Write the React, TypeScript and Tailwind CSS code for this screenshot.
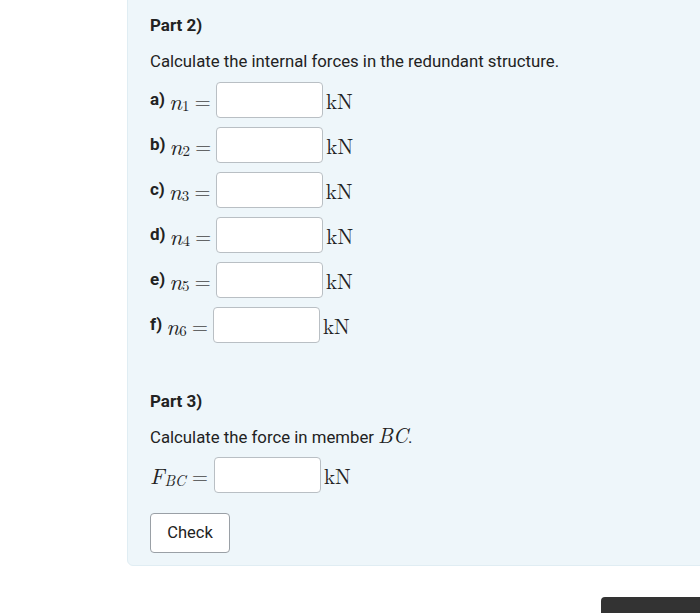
const rows = [
  { label: "a)", sub: "1" },
  { label: "b)", sub: "2" },
  { label: "c)", sub: "3" },
  { label: "d)", sub: "4" },
  { label: "e)", sub: "5" },
  { label: "f)", sub: "6" },
];

const serif = "font-['Latin_Modern_Roman','Liberation_Serif',serif]";

function AnswerBox() {
  return (
    <input
      type="text"
      className="w-[107px] h-[36px] rounded-[4px] border border-[#b9bfc4] bg-white outline-none"
    />
  );
}

function Unit() {
  return <span className={`${serif} text-[21px] text-[#222] ml-[3px] leading-none`}>kN</span>;
}

export default function App() {
  return (
    <div className="w-[700px] h-[613px] bg-white overflow-hidden relative font-['Roboto',sans-serif] text-[#222]">
      <div className="ml-[127px] mr-[-20px] mt-[-10px] h-[576px] bg-[#eef6fa] border border-[#e0edf3] rounded-b-[6px] pl-[22px] pt-[23px]">
        <h2 className="text-[17px] font-bold leading-[22px]">Part 2)</h2>
        <p className="text-[16.75px] mt-[14px] leading-[22px]">
          Calculate the internal forces in the redundant structure.
        </p>

        <div className="mt-[10px] flex flex-col gap-[9px]">
          {rows.map((r) => (
            <div key={r.label} className="flex items-center h-[36px]">
              <span className="text-[17px] font-bold">{r.label}</span>
              <span className={`${serif} italic text-[23px] ml-[4px] leading-none`}>n</span>
              <span className={`${serif} text-[15px] leading-none mt-[9px]`}>{r.sub}</span>
              <span className={`${serif} text-[21px] mx-[5px] leading-none text-[#444]`}>=</span>
              <AnswerBox />
              <Unit />
            </div>
          ))}
        </div>

        <h2 className="text-[17px] font-bold leading-[22px] mt-[47px]">Part 3)</h2>
        <p className="text-[16.75px] mt-[12px] leading-[22px]">
          Calculate the force in member{" "}
          <span className={`${serif} italic text-[21px] leading-none`}>BC</span>.
        </p>

        <div className="flex items-center h-[36px] mt-[9px]">
          <span className={`${serif} italic text-[22px] leading-none`}>F</span>
          <span className={`${serif} italic text-[15px] leading-none mt-[9px]`}>BC</span>
          <span className={`${serif} text-[21px] mx-[6px] leading-none text-[#444]`}>=</span>
          <AnswerBox />
          <Unit />
        </div>

        <button className="mt-[20px] w-[80px] h-[40px] bg-white border border-[#9aa0a6] rounded-[4px] text-[16.5px] text-[#222]">
          Check
        </button>
      </div>

      <div className="absolute left-[601px] top-[597px] w-[110px] h-[30px] bg-[#333] rounded-tl-[4px]" />
    </div>
  );
}
